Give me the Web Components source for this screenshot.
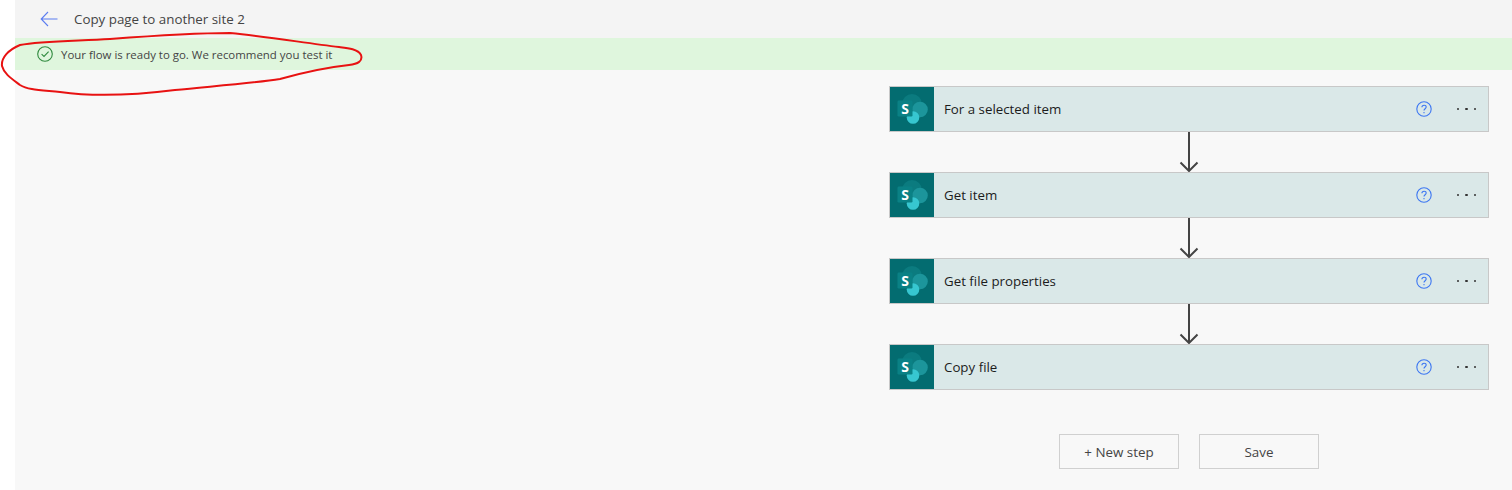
<!DOCTYPE html>
<html>
<head>
<meta charset="utf-8">
<title>Copy page to another site 2</title>
<style>
  html, body { margin: 0; padding: 0; background: #fff; }
  body { width: 1512px; height: 490px; overflow: hidden; font-family: "Open Sans", "Liberation Sans", sans-serif; position: relative; }
</style>
</head>
<body>
<flow-page></flow-page>
<red-scribble></red-scribble>

<script>
const spIcon = `
  <svg width="34" height="34" viewBox="0 0 34 34">
    <circle cx="17" cy="12" r="10" fill="#0b7b7f"/>
    <circle cx="25" cy="17.5" r="7.8" fill="#1c959b"/>
    <circle cx="18" cy="25.5" r="6.3" fill="#37c6d0"/>
    <rect x="2.5" y="8.5" width="15" height="16" rx="1.2" fill="#0a8185"/>
    <text x="10" y="21.6" text-anchor="middle" font-family="Open Sans, Liberation Sans, sans-serif" font-size="14" font-weight="700" fill="#fff">S</text>
  </svg>`;

class FlowHeader extends HTMLElement {
  constructor() {
    super();
    this.attachShadow({ mode: "open" });
    this.shadowRoot.innerHTML = `
      <style>
        :host { display: flex; align-items: center; height: 38px; background: #f4f4f4; padding-left: 25px; color: #444; font-size: 13.35px; }
        svg { display: block; margin-right: 16px; }
      </style>
      <svg width="18" height="16" viewBox="0 0 18 16" fill="none" stroke="#5b7cf0" stroke-width="1.1">
        <path d="M17.5 8H1.2M8 1 1.2 8 8 15"/>
      </svg>
      <span><slot></slot></span>
    `;
  }
}

class StatusBanner extends HTMLElement {
  constructor() {
    super();
    this.attachShadow({ mode: "open" });
    this.shadowRoot.innerHTML = `
      <style>
        :host { display: flex; align-items: center; height: 32px; background: #dff6dd; padding-left: 22px; color: #444; font-size: 11.45px; }
        svg { display: block; margin-right: 8px; }
      </style>
      <svg width="16" height="16" viewBox="0 0 16 16" fill="none" stroke="#2f8a3e" stroke-width="1.1">
        <circle cx="8" cy="8" r="7.3"/>
        <path d="M4.6 8.2 7 10.5l4.6-4.8"/>
      </svg>
      <span><slot></slot></span>
    `;
  }
}

class FlowStep extends HTMLElement {
  constructor() {
    super();
    this.attachShadow({ mode: "open" });
    this.shadowRoot.innerHTML = `
      <style>
        :host { display: flex; align-items: stretch; box-sizing: border-box; width: 600px; height: 46px; background: #dae8e8; border: 1px solid #c8c8c8; color: #1c1c1c; font-size: 13.3px; }
        .logo { width: 44px; flex: none; background: #036c70; display: flex; align-items: center; justify-content: center; }
        .name { flex: 1; display: flex; align-items: center; padding-left: 10px; }
        .help { display: flex; align-items: center; margin-right: 25px; }
        .more { display: flex; align-items: center; gap: 6px; margin-right: 12px; }
        .more i { display: block; width: 2.5px; height: 2.5px; background: #333; border-radius: 50%; }
        svg { display: block; }
      </style>
      <div class="logo">${spIcon}</div>
      <div class="name"><slot></slot></div>
      <div class="help">
        <svg width="16" height="16" viewBox="0 0 16 16" fill="none" stroke="#3d77f2" stroke-width="1.1">
          <circle cx="8" cy="8" r="7.2"/>
          <path d="M5.9 6.3c0-1.3 1-2.1 2.2-2.1s2.1.8 2.1 1.9c0 1.7-2.2 1.6-2.2 3.5"/>
          <path d="M8 11v1.2"/>
        </svg>
      </div>
      <div class="more"><i></i><i></i><i></i></div>
    `;
  }
}

class StepArrow extends HTMLElement {
  constructor() {
    super();
    this.attachShadow({ mode: "open" });
    this.shadowRoot.innerHTML = `
      <style>
        :host { display: flex; justify-content: center; height: 40px; }
        svg { display: block; }
      </style>
      <svg width="20" height="40" viewBox="0 0 20 40" fill="none" stroke="#444" stroke-width="2">
        <path d="M10 0v39M1.5 30.5 10 39l8.5-8.5"/>
      </svg>
    `;
  }
}

class FlowButton extends HTMLElement {
  constructor() {
    super();
    this.attachShadow({ mode: "open" });
    this.shadowRoot.innerHTML = `
      <style>
        :host { display: flex; align-items: center; justify-content: center; box-sizing: border-box; width: 120px; height: 35px; padding-top: 1px; border: 1px solid #d0d0d0; color: #444; font-size: 13.4px; background: #f8f8f8; }
      </style>
      <slot></slot>
    `;
  }
}

class FlowPage extends HTMLElement {
  constructor() {
    super();
    this.attachShadow({ mode: "open" });
    this.shadowRoot.innerHTML = `
      <style>
        :host { display: block; box-sizing: border-box; margin-left: 15px; height: 490px; background: #f8f8f8; }
        .canvas { padding: 16px 0 0 874px; width: 600px; }
        .buttons { display: flex; justify-content: center; gap: 20px; margin-top: 44px; }
      </style>
      <flow-header>Copy page to another site 2</flow-header>
      <status-banner>Your flow is ready to go. We recommend you test it</status-banner>
      <div class="canvas">
        <flow-step>For a selected item</flow-step>
        <step-arrow></step-arrow>
        <flow-step>Get item</flow-step>
        <step-arrow></step-arrow>
        <flow-step>Get file properties</flow-step>
        <step-arrow></step-arrow>
        <flow-step>Copy file</flow-step>
        <div class="buttons">
          <flow-button>+ New step</flow-button>
          <flow-button>Save</flow-button>
        </div>
      </div>
    `;
  }
}

// hand drawn circle sits over the banner
class RedScribble extends HTMLElement {
  constructor() {
    super();
    this.attachShadow({ mode: "open" });
    this.shadowRoot.innerHTML = `
      <style>
        :host { position: absolute; left: 0; top: 0; width: 380px; height: 110px; pointer-events: none; }
        svg { display: block; }
      </style>
      <svg width="380" height="110" viewBox="0 0 380 110" fill="none" stroke="#e81212" stroke-width="2" stroke-linecap="round">
        <path d="M339 47C347 48 358 49 361 55C363 61 358 64 349 65C330 67 305 72 280 79C255 83 215 86 175 90C135 95 95 97 60 92C40 90 28 90 20 85C12 79 4 74 2 66C1 58 8 50 20 45C40 41 75 41 110 39C150 36 190 33 230 33C270 37 305 43 339 47Z"/>
      </svg>
    `;
  }
}

customElements.define("flow-header", FlowHeader);
customElements.define("status-banner", StatusBanner);
customElements.define("flow-step", FlowStep);
customElements.define("step-arrow", StepArrow);
customElements.define("flow-button", FlowButton);
customElements.define("flow-page", FlowPage);
customElements.define("red-scribble", RedScribble);
</script>
</body>
</html>
